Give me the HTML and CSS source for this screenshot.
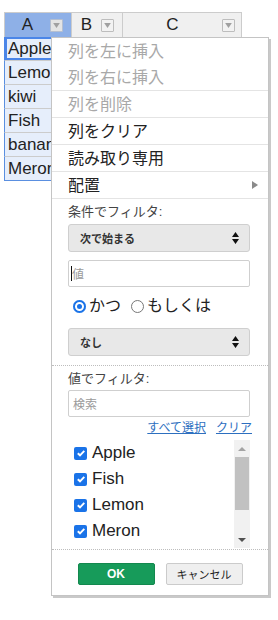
FILE: index.html
```html
<!DOCTYPE html>
<html lang="ja">
<head>
<meta charset="utf-8">
<link rel="stylesheet" href="styles.css">
</head>
<body>
<div class="page">
  <div class="grid">
    <div class="hdr">
      <div class="hcell col-a sel"><span class="hlabel">A</span><span class="hbtn"><svg viewBox="0 0 8 6" width="7" height="5"><path d="M0 0H8L4 6Z" fill="#a0a0a0"/></svg></span></div>
      <div class="hcell col-b"><span class="hlabel">B</span><span class="hbtn"><svg viewBox="0 0 8 6" width="7" height="5"><path d="M0 0H8L4 6Z" fill="#a0a0a0"/></svg></span></div>
      <div class="hcell col-c last"><span class="hlabel">C</span><span class="hbtn"><svg viewBox="0 0 8 6" width="7" height="5"><path d="M0 0H8L4 6Z" fill="#a0a0a0"/></svg></span></div>
    </div>
    <div class="rows">
      <div class="row"><div class="cell col-a cur">Apple</div><div class="cell col-b"></div><div class="cell col-c last"></div></div>
      <div class="row"><div class="cell col-a">Lemon</div><div class="cell col-b"></div><div class="cell col-c last"></div></div>
      <div class="row"><div class="cell col-a">kiwi</div><div class="cell col-b"></div><div class="cell col-c last"></div></div>
      <div class="row"><div class="cell col-a">Fish</div><div class="cell col-b"></div><div class="cell col-c last"></div></div>
      <div class="row"><div class="cell col-a">banana</div><div class="cell col-b"></div><div class="cell col-c last"></div></div>
      <div class="row lastrow"><div class="cell col-a">Meron</div><div class="cell col-b"></div><div class="cell col-c last"></div></div>
    </div>
  </div>

  <div class="menu">
    <div class="item disabled nosep">列を左に挿入</div>
    <div class="item disabled">列を右に挿入</div>
    <div class="item disabled">列を削除</div>
    <div class="item">列をクリア</div>
    <div class="item">読み取り専用</div>
    <div class="item">配置<span class="sub"><svg viewBox="0 0 6 8" width="6" height="8"><path d="M0 0L6 4L0 8Z" fill="#8a8a8a"/></svg></span></div>

    <div class="section cond">
      <div class="label">条件でフィルタ:</div>
      <div class="select s1"><span>次で始まる</span><svg class="updown" viewBox="0 0 7 12" width="7" height="12"><path d="M0 5L3.5 0L7 5Z M0 7L3.5 12L7 7Z" fill="#111"/></svg></div>
      <div class="input i1"><span class="caret"></span><span class="ph">値</span></div>
      <div class="radios">
        <span class="radio on"></span><span class="rtext">かつ</span>
        <span class="radio off"></span><span class="rtext">もしくは</span>
      </div>
      <div class="select s2"><span>なし</span><svg class="updown" viewBox="0 0 7 12" width="7" height="12"><path d="M0 5L3.5 0L7 5Z M0 7L3.5 12L7 7Z" fill="#111"/></svg></div>
    </div>

    <div class="section val">
      <div class="label">値でフィルタ:</div>
      <div class="input i2"><span class="ph">検索</span></div>
      <div class="links"><a class="lnk">すべて選択</a><a class="lnk">クリア</a></div>
      <div class="list">
        <div class="items">
          <div class="opt"><span class="cb"><svg viewBox="0 0 10 10" width="10" height="10"><path d="M1.8 5.2L4 7.3L8.3 2.8" stroke="#fff" stroke-width="1.9" fill="none"/></svg></span>Apple</div>
          <div class="opt"><span class="cb"><svg viewBox="0 0 10 10" width="10" height="10"><path d="M1.8 5.2L4 7.3L8.3 2.8" stroke="#fff" stroke-width="1.9" fill="none"/></svg></span>Fish</div>
          <div class="opt"><span class="cb"><svg viewBox="0 0 10 10" width="10" height="10"><path d="M1.8 5.2L4 7.3L8.3 2.8" stroke="#fff" stroke-width="1.9" fill="none"/></svg></span>Lemon</div>
          <div class="opt"><span class="cb"><svg viewBox="0 0 10 10" width="10" height="10"><path d="M1.8 5.2L4 7.3L8.3 2.8" stroke="#fff" stroke-width="1.9" fill="none"/></svg></span>Meron</div>
        </div>
        <div class="sbar">
          <svg class="sarrow" viewBox="0 0 8 4" width="8" height="4"><path d="M0 4L4 0L8 4Z" fill="#a3a3a3"/></svg>
          <div class="thumb"></div>
          <svg class="sarrow down" viewBox="0 0 8 4" width="8" height="4"><path d="M0 0L4 4L8 0Z" fill="#505050"/></svg>
        </div>
      </div>
    </div>

    <div class="buttons">
      <button class="btn ok">OK</button>
      <button class="btn cancel">キャンセル</button>
    </div>
  </div>
</div>
</body>
</html>
```
FILE: styles.css
```css
* { box-sizing: border-box; }
html, body { margin: 0; padding: 0; background: #fff; }
body { font-family: "Liberation Sans", "Noto Sans CJK JP", sans-serif; color: #222; }

.page { position: relative; width: 278px; height: 620px; padding: 12px 0 0 4px; }

/* grid */
.grid { width: 238px; }
.hdr { display: flex; height: 25px; }
.hcell { display: flex; align-items: center; height: 25px; background: #f0f0f0; border-top: 1px solid #ccc; border-left: 1px solid #ccc; padding-right: 8px; }
.hcell.last { border-right: 1px solid #ccc; padding-right: 6px; }
.hcell.sel { background: #8eb0e7; }
.col-a { width: 67px; }
.col-b { width: 51px; }
.col-c { width: 120px; }
.hlabel { flex: 1; text-align: center; font-size: 17px; line-height: 24px; color: #222; }
.hbtn { width: 13px; height: 13px; border: 1px solid #bdbdbd; background: #f2f2f2; display: flex; align-items: center; justify-content: center; border-radius: 1px; }
.hcell.sel .hbtn { background: #e4e4e4; border-color: #b5bfd0; }

.rows { display: flex; flex-direction: column; }
.row { display: flex; height: 24px; }
.cell { height: 24px; border-left: 1px solid #ccc; border-bottom: 1px solid #ccc; font-size: 17px; line-height: 23px; padding-left: 3px; white-space: nowrap; overflow: hidden; }
.cell.last { border-right: 1px solid #ccc; }
.cell.col-a { background: #e6eefb; border-left-color: #5a8fe0; }
.cell.cur { box-shadow: inset 0 0 0 2px #4b86e8; border-left-color: #4b86e8; }
.lastrow .cell.col-a { border-bottom-color: #5a8fe0; }

/* menu */
.menu { position: absolute; left: 51px; top: 37px; width: 218px; background: #fff; border: 1px solid #c4c4c4; box-shadow: 2px 2px 0 #c9c9c9; }
.item { position: relative; height: 27px; line-height: 27px; font-size: 16px; padding-left: 16px; border-bottom: 1px solid #e4e4e4; color: #222; }
.item.nosep { border-bottom: none; height: 26px; }
.item.disabled { color: #a8a8a8; }
.sub { position: absolute; right: 10px; top: 9px; display: flex; }

.section { padding: 0 16px 0 16px; }
.cond { padding-top: 4px; padding-bottom: 9px; border-bottom: 1px dotted #bdbdbd; }
.val { padding-top: 4px; padding-bottom: 1px; border-bottom: 1px dotted #bdbdbd; }
.label { font-size: 13px; line-height: 18px; color: #444; }

.select { display: flex; align-items: center; justify-content: space-between; width: 182px; height: 28px; background: #e8e8e8; border: 1px solid #cfcfcf; border-radius: 3px; padding: 0 10px 0 11px; font-size: 11px; font-weight: bold; color: #333; }
.s1 { margin-top: 3px; }
.s2 { margin-top: 11px; }

.input { display: flex; align-items: center; width: 182px; height: 27px; border: 1px solid #cfcfcf; border-radius: 2px; background: #fff; padding-left: 2px; }
.i1 { margin-top: 8px; }
.i2 { margin-top: 2px; padding-left: 4px; }
.caret { width: 1px; height: 15px; background: #111; }
.ph { font-size: 12px; color: #9a9a9a; }

.radios { display: flex; align-items: center; height: 22px; margin-top: 8px; padding-left: 5px; font-size: 16px; }
.radio { width: 13px; height: 13px; border-radius: 50%; display: inline-block; }
.radio.on { background: #1a73e8; box-shadow: inset 0 0 0 2px #1a73e8, inset 0 0 0 4px #fff; }
.radio.off { border: 1px solid #777; margin-left: 10px; }
.rtext { margin-left: 3px; line-height: 22px; }

.links { display: flex; justify-content: flex-end; gap: 10px; margin-top: 3px; height: 16px; line-height: 16px; font-size: 12px; }
.lnk { color: #2d6fbf; text-decoration: underline; }

.list { display: flex; width: 182px; height: 108px; margin-top: 4px; overflow: hidden; }
.items { flex: 1; overflow: hidden; }
.opt { display: flex; align-items: center; height: 26px; padding-left: 6px; font-size: 17px; color: #222; }
.cb { width: 13px; height: 13px; border-radius: 2px; background: #1a73e8; display: flex; align-items: center; justify-content: center; margin-right: 5px; flex: none; }
.sbar { width: 16px; height: 108px; background: #f1f1f1; display: flex; flex-direction: column; align-items: center; }
.sarrow { margin-top: 7px; flex: none; }
.thumb { width: 14px; height: 53px; background: #c1c1c1; margin-top: 6px; }
.sarrow.down { margin-top: auto; margin-bottom: 6px; }

.buttons { display: flex; justify-content: center; gap: 11px; padding: 13px 0 10px 0; }
.btn { width: 77px; height: 22px; border-radius: 2px; font-family: "Liberation Sans", "Noto Sans CJK JP", sans-serif; padding: 0; }
.ok { background: #179b5a; border: 1px solid #13884e; color: #fff; font-weight: bold; font-size: 12px; }
.cancel { background: #efefef; border: 1px solid #cbcbcb; color: #222; font-size: 11px; }
```
